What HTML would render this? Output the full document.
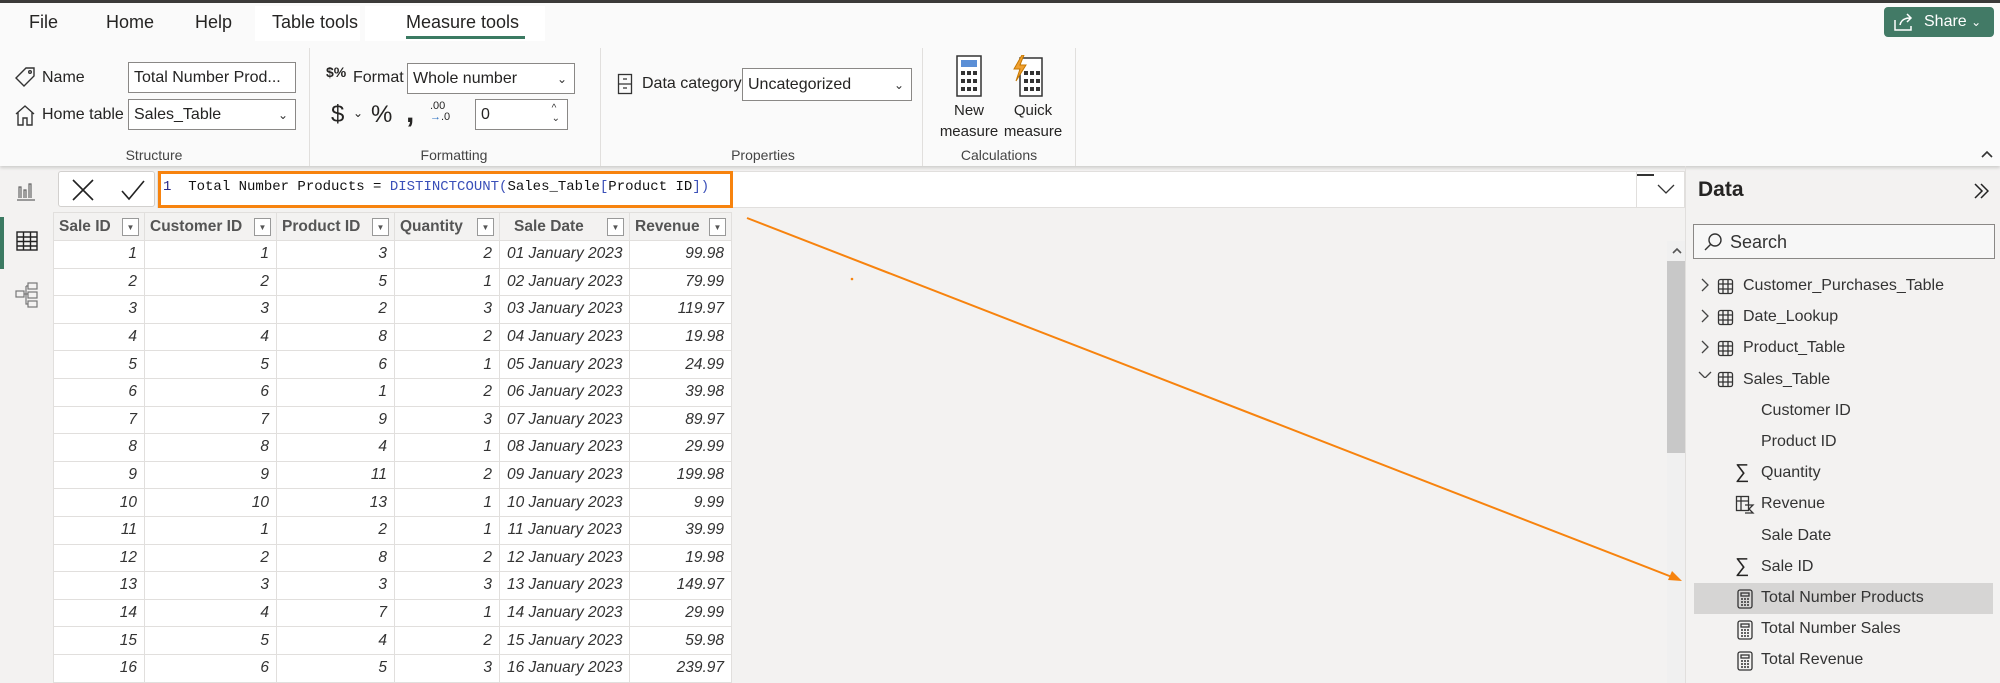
<!DOCTYPE html>
<html><head><meta charset="utf-8"><style>
*{margin:0;padding:0;box-sizing:border-box}
body{width:2000px;height:683px;overflow:hidden;background:#f3f2f1;font-family:"Liberation Sans",sans-serif;color:#252423;position:relative}
.a{position:absolute}
.t{font-size:17px;white-space:nowrap}
.inp{position:absolute;background:#fff;border:1px solid #8a8886;font-size:16px;padding-left:5px;display:flex;align-items:center;white-space:nowrap}
.chev{position:absolute;right:7px;font-size:12px;color:#333}
.gl{position:absolute;top:147px;font-size:14px;color:#444;transform:translateX(-50%)}
.sep{position:absolute;top:48px;height:118px;width:1px;background:#e1dfdd}
table{border-collapse:collapse;position:absolute;left:53px;top:212px;background:#fff;font-size:15.5px;table-layout:fixed;width:678px}
td,th{border:1px solid #e1dfdd;height:27.6px;padding:0 7px;text-align:right;font-style:italic;color:#333;font-weight:normal;white-space:nowrap;overflow:hidden}
th{background:#f3f2f1;font-style:normal;font-weight:bold;text-align:left;color:#555;height:28px;position:relative;padding:0 5px}
th .f{position:absolute;right:5px;top:5px;width:17px;height:18px;border:1px solid #999;background:#fff;font-size:8px;text-align:center;line-height:17px;color:#555}
.tr{position:absolute;left:1761px;font-size:16px;color:#333}
.ic{position:absolute;left:1735px}
</style></head><body>
<div class="a" style="left:0;top:0;width:2000px;height:3px;background:#3b3a39"></div>
<div class="a" style="left:0;top:3px;width:2000px;height:163px;background:#fafafa;box-shadow:0 2px 3px rgba(0,0,0,.15)"></div>
<div class="a" style="left:255px;top:6px;width:105px;height:35px;background:#fff"></div>
<div class="a" style="left:365px;top:6px;width:180px;height:35px;background:#fff"></div>
<div class="a t" style="left:29px;top:12px;font-size:18px">File</div>
<div class="a t" style="left:106px;top:12px;font-size:18px">Home</div>
<div class="a t" style="left:195px;top:12px;font-size:18px">Help</div>
<div class="a t" style="left:272px;top:12px;font-size:18px">Table tools</div>
<div class="a t" style="left:406px;top:12px;font-size:18px">Measure tools</div>
<div class="a" style="left:406px;top:36px;width:119px;height:3px;background:#3b7a62"></div>
<div class="a" style="left:1884px;top:7px;width:110px;height:30px;background:#427a66;border-radius:4px;color:#fff;font-size:16px;line-height:30px;padding-left:40px;white-space:nowrap">Share <span style="font-size:12px">&#8964;</span></div>
<svg class="a" style="left:1893px;top:12px" width="22" height="20" viewBox="0 0 22 20" fill="none" stroke="#fff" stroke-width="1.5"><path d="M2 8v10h16v-4M7 13c1-5 5-7 10-7M14 2l4 4-4 4"/></svg>
<svg class="a" style="left:1981px;top:150px" width="12" height="8" viewBox="0 0 12 8" fill="none" stroke="#333" stroke-width="1.6"><path d="M1 7l5-5 5 5"/></svg>
<svg class="a" style="left:14px;top:66px" width="22" height="22" viewBox="0 0 22 22" fill="none" stroke="#333" stroke-width="1.4"><path d="M12 2h8v8l-10 10-8-8z"/><circle cx="16" cy="6" r="1.3"/></svg>
<div class="a t" style="left:42px;top:69px;font-size:16px">Name</div>
<div class="inp" style="left:128px;top:62px;width:168px;height:31px">Total Number Prod...</div>
<svg class="a" style="left:13px;top:103px" width="24" height="24" viewBox="0 0 24 24" fill="none" stroke="#333" stroke-width="1.4"><path d="M3 11L12 3l9 8M5 9v13h5v-7h4v7h5V9"/></svg>
<div class="a t" style="left:42px;top:106px;font-size:16px">Home table</div>
<div class="inp" style="left:128px;top:99px;width:168px;height:31px">Sales_Table<span class="chev">⌄</span></div>
<div class="gl" style="left:154px">Structure</div>
<div class="sep" style="left:309px"></div>
<div class="a" style="left:326px;top:64px;font-size:14px;font-weight:bold">$%</div>
<div class="a t" style="left:353px;top:69px;font-size:16px">Format</div>
<div class="inp" style="left:407px;top:63px;width:168px;height:31px">Whole number<span class="chev">⌄</span></div>
<div class="a" style="left:331px;top:101px;font-size:24px">$</div>
<div class="a" style="left:353px;top:106px;font-size:12px">⌄</div>
<div class="a" style="left:371px;top:101px;font-size:24px">%</div>
<div class="a" style="left:406px;top:96px;font-size:30px;font-weight:bold">,</div>
<div class="a" style="left:430px;top:101px;font-size:11px;line-height:11px">.00<br><span style="color:#2b6fc0">→</span>.0</div>
<div class="inp" style="left:475px;top:99px;width:93px;height:31px">0<span class="chev" style="font-size:10px;line-height:10px;top:4px">^<br>⌄</span></div>
<div class="gl" style="left:454px">Formatting</div>
<div class="sep" style="left:600px"></div>
<svg class="a" style="left:617px;top:73px" width="16" height="22" viewBox="0 0 16 22" fill="none" stroke="#333" stroke-width="1.3"><rect x="1.5" y="1.5" width="13" height="19"/><path d="M1.5 11h13M6 6h4M6 15h4"/></svg>
<div class="a t" style="left:642px;top:75px;font-size:16px">Data category</div>
<div class="inp" style="left:742px;top:68px;width:170px;height:33px">Uncategorized<span class="chev">⌄</span></div>
<div class="gl" style="left:763px">Properties</div>
<div class="sep" style="left:922px"></div>
<svg class="a" style="left:956px;top:55px" width="26" height="42" viewBox="0 0 26 42"><rect x="1" y="1" width="24" height="40" fill="#fff" stroke="#333" stroke-width="1.5"/><rect x="5" y="5" width="16" height="7" fill="#5b8fd6"/><g fill="#333"><rect x="5" y="16" width="4" height="4"/><rect x="11" y="16" width="4" height="4"/><rect x="17" y="16" width="4" height="4"/><rect x="5" y="24" width="4" height="4"/><rect x="11" y="24" width="4" height="4"/><rect x="17" y="24" width="4" height="4"/><rect x="5" y="32" width="4" height="4"/><rect x="11" y="32" width="4" height="4"/><rect x="17" y="32" width="4" height="4"/></g></svg>
<svg class="a" style="left:1010px;top:55px" width="36" height="42" viewBox="0 0 36 42"><rect x="10" y="3" width="22" height="38" fill="#fff" stroke="#333" stroke-width="1.5"/><g fill="#333"><rect x="14" y="16" width="4" height="4"/><rect x="20" y="16" width="4" height="4"/><rect x="26" y="16" width="4" height="4"/><rect x="14" y="24" width="4" height="4"/><rect x="20" y="24" width="4" height="4"/><rect x="26" y="24" width="4" height="4"/><rect x="14" y="32" width="4" height="4"/><rect x="20" y="32" width="4" height="4"/><rect x="26" y="32" width="4" height="4"/></g><path d="M12 0L4 14h6L6 26l10-16h-6l4-10z" fill="#f0a030" stroke="#c77800"/></svg>
<div class="a" style="left:939px;top:100px;width:60px;text-align:center;font-size:15px;line-height:21px">New<br>measure</div>
<div class="a" style="left:1003px;top:100px;width:60px;text-align:center;font-size:15px;line-height:21px">Quick<br>measure</div>
<div class="gl" style="left:999px">Calculations</div>
<div class="sep" style="left:1075px"></div>
<svg class="a" style="left:16px;top:181px" width="20" height="20" viewBox="0 0 20 20" fill="none" stroke="#666" stroke-width="1.2"><path d="M1 19h18M3 17V6h2v11M8 17V9h2v8M13 17V3h2v14"/></svg>
<div class="a" style="left:0;top:217px;width:4px;height:52px;background:#3b7a62"></div>
<svg class="a" style="left:16px;top:231px" width="22" height="20" viewBox="0 0 22 20" fill="none" stroke="#222" stroke-width="1.4"><rect x="1" y="1" width="20" height="18"/><path d="M1 6h20M1 10.5h20M1 15h20M7.5 1v18M14.5 1v18"/></svg>
<svg class="a" style="left:15px;top:282px" width="24" height="26" viewBox="0 0 24 26" fill="none" stroke="#777" stroke-width="1.2"><rect x="1" y="9" width="8" height="6"/><rect x="13" y="1" width="9" height="6"/><rect x="13" y="10" width="9" height="6"/><rect x="13" y="19" width="9" height="6"/><path d="M9 12h4M11 4v18h2M11 4h2"/></svg>
<div class="a" style="left:58px;top:171px;width:97px;height:36px;background:#fff;border:1px solid #d2d0ce;border-radius:3px"></div>
<svg class="a" style="left:70px;top:178px" width="76" height="24" viewBox="0 0 76 24" fill="none" stroke="#222" stroke-width="1.6"><path d="M3 2l20 20M23 2L3 22M52 13l7 8L74 3"/></svg>
<div class="a" style="left:157px;top:171px;width:1528px;height:37px;background:#fff;border:1px solid #e1dfdd"></div>
<div class="a" style="left:1636px;top:171px;width:1px;height:37px;background:#e1dfdd"></div>
<div class="a" style="left:1637px;top:174px;width:17px;height:2px;background:#333"></div>
<svg class="a" style="left:1656px;top:183px" width="20" height="12" viewBox="0 0 20 12" fill="none" stroke="#333" stroke-width="1.3"><path d="M2 2l8 8 8-8"/></svg>
<div class="a" style="left:158px;top:171px;width:575px;height:37px;border:3px solid #f7830e"></div>
<div class="a" style="left:163px;top:179px;font-family:'Liberation Mono',monospace;font-size:14px;white-space:pre;color:#111"><span style="color:#2b2b8a">1</span>  Total Number Products = <span style="color:#3a4fb8">DISTINCTCOUNT(</span>Sales_Table<span style="color:#3a4fb8">[</span>Product ID<span style="color:#3a4fb8">])</span></div>
<table>
<colgroup><col style="width:91px"><col style="width:132px"><col style="width:118px"><col style="width:105px"><col style="width:130px"><col style="width:102px"></colgroup>
<tr><th>Sale ID<span class="f">▼</span></th><th>Customer ID<span class="f">▼</span></th><th>Product ID<span class="f">▼</span></th><th>Quantity<span class="f">▼</span></th><th style="padding-left:14px">Sale Date<span class="f">▼</span></th><th>Revenue<span class="f">▼</span></th></tr>
<tr><td>1</td><td>1</td><td>3</td><td>2</td><td>01 January 2023</td><td>99.98</td></tr>
<tr><td>2</td><td>2</td><td>5</td><td>1</td><td>02 January 2023</td><td>79.99</td></tr>
<tr><td>3</td><td>3</td><td>2</td><td>3</td><td>03 January 2023</td><td>119.97</td></tr>
<tr><td>4</td><td>4</td><td>8</td><td>2</td><td>04 January 2023</td><td>19.98</td></tr>
<tr><td>5</td><td>5</td><td>6</td><td>1</td><td>05 January 2023</td><td>24.99</td></tr>
<tr><td>6</td><td>6</td><td>1</td><td>2</td><td>06 January 2023</td><td>39.98</td></tr>
<tr><td>7</td><td>7</td><td>9</td><td>3</td><td>07 January 2023</td><td>89.97</td></tr>
<tr><td>8</td><td>8</td><td>4</td><td>1</td><td>08 January 2023</td><td>29.99</td></tr>
<tr><td>9</td><td>9</td><td>11</td><td>2</td><td>09 January 2023</td><td>199.98</td></tr>
<tr><td>10</td><td>10</td><td>13</td><td>1</td><td>10 January 2023</td><td>9.99</td></tr>
<tr><td>11</td><td>1</td><td>2</td><td>1</td><td>11 January 2023</td><td>39.99</td></tr>
<tr><td>12</td><td>2</td><td>8</td><td>2</td><td>12 January 2023</td><td>19.98</td></tr>
<tr><td>13</td><td>3</td><td>3</td><td>3</td><td>13 January 2023</td><td>149.97</td></tr>
<tr><td>14</td><td>4</td><td>7</td><td>1</td><td>14 January 2023</td><td>29.99</td></tr>
<tr><td>15</td><td>5</td><td>4</td><td>2</td><td>15 January 2023</td><td>59.98</td></tr>
<tr><td>16</td><td>6</td><td>5</td><td>3</td><td>16 January 2023</td><td>239.97</td></tr>
</table>
<div class="a" style="left:1667px;top:241px;width:19px;height:442px;background:#f0f0f0"></div>
<div class="a" style="left:1667px;top:261px;width:19px;height:192px;background:#c8c8c8"></div>
<svg class="a" style="left:1672px;top:247px" width="10" height="7" viewBox="0 0 10 7" fill="none" stroke="#555" stroke-width="1.6"><path d="M1 6l4-4 4 4"/></svg>
<div class="a" style="left:1685px;top:166px;width:1px;height:517px;background:#e1dfdd"></div>
<svg class="a" style="left:0;top:0" width="2000" height="683"><line x1="747" y1="218" x2="1672" y2="577" stroke="#f7830e" stroke-width="2"/><path d="M1682 581l-14-1 4-9z" fill="#f7830e"/><circle cx="852" cy="279" r="1.3" fill="#f7830e"/></svg>
<div class="a" style="left:1698px;top:178px;font-size:21px;font-weight:bold;color:#252423">Data</div>
<svg class="a" style="left:1973px;top:182px" width="16" height="18" viewBox="0 0 16 18" fill="none" stroke="#222" stroke-width="1.5"><path d="M2 2l7 7-7 7M8 2l7 7-7 7"/></svg>
<div class="a" style="left:1693px;top:224px;width:302px;height:35px;border:1px solid #8a8886;background:#f7f7f7"></div>
<svg class="a" style="left:1703px;top:232px" width="20" height="20" viewBox="0 0 20 20" fill="none" stroke="#333" stroke-width="1.4"><circle cx="12" cy="8" r="6"/><path d="M8 12l-6 6"/></svg>
<div class="a" style="left:1730px;top:232px;font-size:18px;color:#333">Search</div>
<div class="a" style="left:1694px;top:583px;width:299px;height:31px;background:#d6d5d4"></div>
<svg class="a" style="left:1698px;top:278px" width="14" height="100" viewBox="0 0 14 100" fill="none" stroke="#444" stroke-width="1.3"><path d="M4 1l6 6-6 6M4 32l6 6-6 6M4 63l6 6-6 6M1 94l6 6 6-6" /></svg>
<svg class="a" style="left:1717px;top:278px" width="18" height="110" viewBox="0 0 18 110" fill="none" stroke="#333" stroke-width="1.3"><g id="g"><rect x="1.5" y="1.5" width="14" height="14" rx="2"/><path d="M1.5 6h14M1.5 11h14M6 1.5v14M11 1.5v14"/></g><use href="#g" y="31"/><use href="#g" y="62"/><use href="#g" y="93"/></svg>
<div class="tr" style="left:1743px;top:277px">Customer_Purchases_Table</div>
<div class="tr" style="left:1743px;top:308px">Date_Lookup</div>
<div class="tr" style="left:1743px;top:339px">Product_Table</div>
<div class="tr" style="left:1743px;top:371px">Sales_Table</div>
<div class="tr" style="top:402px">Customer ID</div>
<div class="tr" style="top:433px">Product ID</div>
<div class="ic" style="top:461px;font-size:20px">∑</div>
<div class="tr" style="top:464px">Quantity</div>
<svg class="ic" style="top:495px" width="20" height="20" viewBox="0 0 20 20" fill="none" stroke="#333" stroke-width="1.3"><rect x="1.5" y="1.5" width="12" height="14"/><path d="M1.5 6h12M6 1.5v14M10 10h8l-4 4 4 4h-8"/></svg>
<div class="tr" style="top:495px">Revenue</div>
<div class="tr" style="top:527px">Sale Date</div>
<div class="ic" style="top:555px;font-size:20px">∑</div>
<div class="tr" style="top:558px">Sale ID</div>
<svg class="a" style="left:1737px;top:589px" width="16" height="84" viewBox="0 0 16 84" fill="none" stroke="#333" stroke-width="1.3"><g id="c"><rect x="1" y="1" width="14" height="18" rx="2"/><rect x="4" y="4" width="8" height="3"/><path d="M4 10h2M7 10h2M10 10h2M4 13h2M7 13h2M10 13h2M4 16h2M7 16h2M10 16h2" stroke-width="1.6"/></g><use href="#c" y="31"/><use href="#c" y="62"/></svg>
<div class="tr" style="top:589px">Total Number Products</div>
<div class="tr" style="top:620px">Total Number Sales</div>
<div class="tr" style="top:651px">Total Revenue</div>
</body></html>
